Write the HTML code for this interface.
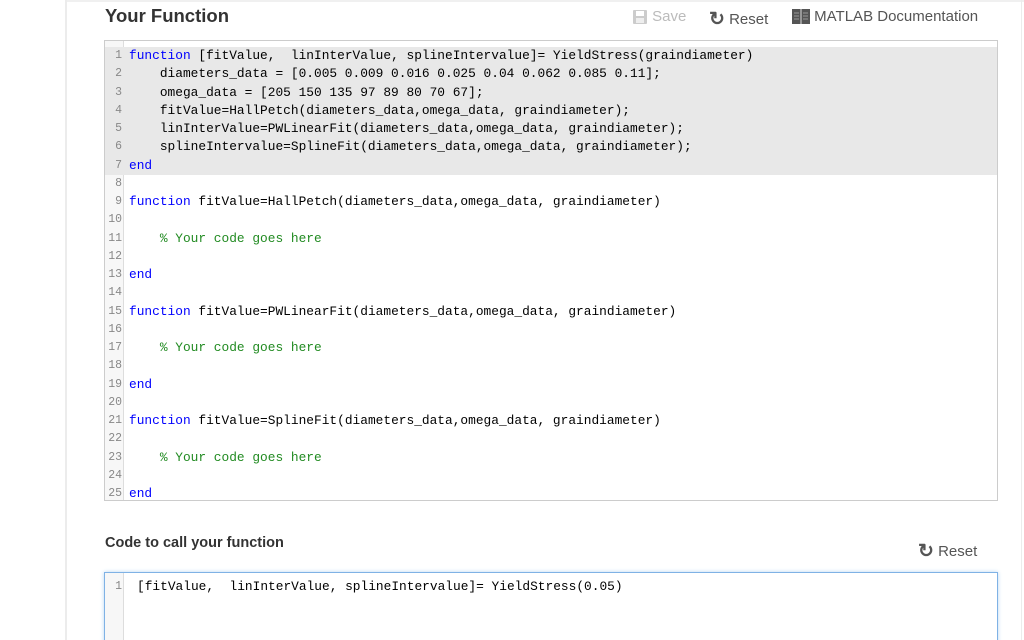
<!DOCTYPE html>
<html><head><style>
html,body{margin:0;width:1024px;height:640px;overflow:hidden}
body{background:#fff;font-family:"Liberation Sans",sans-serif;position:relative}
.lside{position:absolute;left:0;top:0;width:65px;height:640px;background:#fff;border-right:2px solid #ececec}
.rside{position:absolute;left:1021px;top:0;width:3px;height:640px;border-left:1px solid #ececec}
.topsh{position:absolute;left:0;top:0;width:1024px;height:2px;background:#f0f0f0}
h2{position:absolute;left:105px;top:5px;margin:0;font-size:18.5px;font-weight:bold;color:#333}
.tb{position:absolute;top:8px;font-size:15px;color:#555;display:flex;align-items:center}
.ed{position:absolute;left:104px;width:892px;border:1px solid #ccc;background:#fff;overflow:hidden}
.gut{position:absolute;left:0;top:0;bottom:0;width:18px;background:#f7f7f7;border-right:1px solid #ddd}
.lines{position:absolute;left:0;top:6px;right:0;font-family:"Liberation Mono",monospace;font-size:12.85px;line-height:18.25px;color:#000}
.ln{height:18.25px;white-space:pre;position:relative}
.ln .n{position:absolute;left:0;width:17px;text-align:right;color:#888;font-size:11.5px}
.ln .c{position:absolute;left:24px}
.hl{background:#e8e8e8}
.k{color:#0000ff}.g{color:#228b22}
h3{position:absolute;left:105px;top:535px;margin:0;font-size:14.5px;font-weight:bold;color:#333}
</style></head><body>
<div class="topsh"></div><div class="lside"></div><div class="rside"></div>
<h2>Your Function</h2>
<div class="tb" style="left:632px;color:#bbb"><svg width="16" height="16" viewBox="0 0 16 16"><rect x="1" y="1" width="14" height="14" rx="1" fill="#ccc"/><rect x="4" y="2" width="8" height="5" fill="#fff"/><rect x="4" y="9" width="8" height="5" fill="#eee"/></svg>&nbsp;Save</div>
<div class="tb" style="left:709px"><span style="font-size:19px;font-weight:bold;color:#555">&#x21BB;</span>&nbsp;Reset</div>
<div class="tb" style="left:792px"><svg width="18" height="15" viewBox="0 0 18 15"><rect x="0" y="0" width="18" height="15" fill="#555"/><rect x="8.5" y="0" width="1" height="15" fill="#ddd"/><path d="M2 4h5M2 7h5M2 10h5M11 4h5M11 7h5M11 10h5" stroke="#999" stroke-width="1"/></svg>&nbsp;MATLAB Documentation</div>
<div class="ed" style="top:40px;height:459px"><div class="gut"></div>
<div class="lines">
<div class="ln hl"><span class="n">1</span><span class="c"><span class="k">function</span> [fitValue,  linInterValue, splineIntervalue]= YieldStress(graindiameter)</span></div>
<div class="ln hl"><span class="n">2</span><span class="c">    diameters_data = [0.005 0.009 0.016 0.025 0.04 0.062 0.085 0.11];</span></div>
<div class="ln hl"><span class="n">3</span><span class="c">    omega_data = [205 150 135 97 89 80 70 67];</span></div>
<div class="ln hl"><span class="n">4</span><span class="c">    fitValue=HallPetch(diameters_data,omega_data, graindiameter);</span></div>
<div class="ln hl"><span class="n">5</span><span class="c">    linInterValue=PWLinearFit(diameters_data,omega_data, graindiameter);</span></div>
<div class="ln hl"><span class="n">6</span><span class="c">    splineIntervalue=SplineFit(diameters_data,omega_data, graindiameter);</span></div>
<div class="ln hl"><span class="n">7</span><span class="c"><span class="k">end</span></span></div>
<div class="ln"><span class="n">8</span></div>
<div class="ln"><span class="n">9</span><span class="c"><span class="k">function</span> fitValue=HallPetch(diameters_data,omega_data, graindiameter)</span></div>
<div class="ln"><span class="n">10</span></div>
<div class="ln"><span class="n">11</span><span class="c">    <span class="g">% Your code goes here</span></span></div>
<div class="ln"><span class="n">12</span></div>
<div class="ln"><span class="n">13</span><span class="c"><span class="k">end</span></span></div>
<div class="ln"><span class="n">14</span></div>
<div class="ln"><span class="n">15</span><span class="c"><span class="k">function</span> fitValue=PWLinearFit(diameters_data,omega_data, graindiameter)</span></div>
<div class="ln"><span class="n">16</span></div>
<div class="ln"><span class="n">17</span><span class="c">    <span class="g">% Your code goes here</span></span></div>
<div class="ln"><span class="n">18</span></div>
<div class="ln"><span class="n">19</span><span class="c"><span class="k">end</span></span></div>
<div class="ln"><span class="n">20</span></div>
<div class="ln"><span class="n">21</span><span class="c"><span class="k">function</span> fitValue=SplineFit(diameters_data,omega_data, graindiameter)</span></div>
<div class="ln"><span class="n">22</span></div>
<div class="ln"><span class="n">23</span><span class="c">    <span class="g">% Your code goes here</span></span></div>
<div class="ln"><span class="n">24</span></div>
<div class="ln"><span class="n">25</span><span class="c"><span class="k">end</span></span></div>
</div></div>
<h3>Code to call your function</h3>
<div class="tb" style="left:918px;top:540px"><span style="font-size:19px;font-weight:bold;color:#555">&#x21BB;</span>&nbsp;Reset</div>
<div class="ed" style="top:572px;height:80px;border-color:#7fb2e5;box-shadow:0 0 4px #b8d6f3"><div class="gut" style="width:18px"></div>
<div class="lines" style="top:5px"><div class="ln"><span class="n">1</span><span class="c" style="left:32px">[fitValue,  linInterValue, splineIntervalue]= YieldStress(0.05)</span></div></div></div>
</body></html>
